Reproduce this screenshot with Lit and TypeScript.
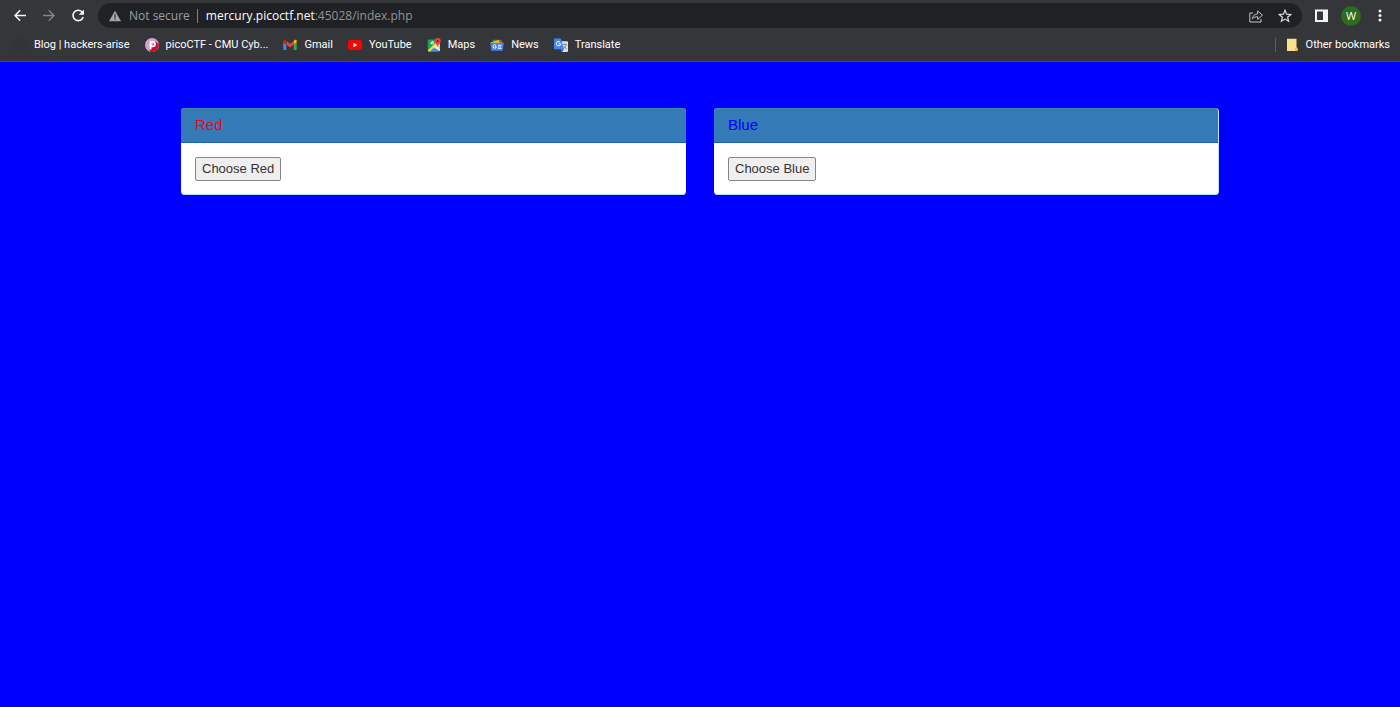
import { LitElement, html, css, svg, TemplateResult } from "lit";
import { customElement, property } from "lit/decorators.js";

interface Bookmark {
  label: string;
  href: string;
  icon: TemplateResult;
}

const picture = (box: string, body: unknown, size = 14) =>
  html`<svg width=${size} height=${size} viewBox=${box} aria-hidden="true">${body}</svg>`;

const bookmarks: Bookmark[] = [
  {
    label: "Blog | hackers-arise",
    href: "#blog",
    icon: picture("0 0 14 14", svg`<rect x="0" y="0" width="14" height="14" rx="1" fill="#333437"/>`),
  },
  {
    label: "picoCTF - CMU Cyb...",
    href: "#picoctf",
    icon: picture("0 0 14 14", svg`
      <circle cx="7" cy="7" r="7" fill="#d3a3cf"/>
      <path d="M10.6 3.2 13.8 6.2A7 7 0 0 1 5 13.7L4.6 11z" fill="#c4102f"/>
      <path d="M5.6 11.4V3.8h2.1a2.2 2.2 0 0 1 0 4.6H5.6" fill="none" stroke="#fff" stroke-width="1.8"/>`),
  },
  {
    label: "Gmail",
    href: "#gmail",
    icon: picture("0 0 14 14", svg`
      <path d="M.3 4.2 3.3 6.4V12H1.1a.8.8 0 0 1-.8-.8z" fill="#4285f4"/>
      <path d="M13.7 4.2 10.7 6.4V12h2.2a.8.8 0 0 0 .8-.8z" fill="#34a853"/>
      <path d="M10.7 3v3.6l3-2.3V3.1c0-1.3-1.3-1.8-2.1-1.1z" fill="#fbbc04"/>
      <path d="M3.3 6.6V3L7 5.8 10.7 3v3.6L7 9.4z" fill="#ea4335"/>
      <path d="M.3 3.1v1.2l3 2.3V3l-.9-.8C1.6 1.6.3 2 .3 3.1z" fill="#c5221f"/>`),
  },
  {
    label: "YouTube",
    href: "#youtube",
    icon: picture("0 0 14 14", svg`
      <rect x="0" y="2" width="14" height="10" rx="2.4" fill="#f00"/>
      <path d="M5.5 4.8v4.4L9.3 7z" fill="#fff"/>`),
  },
  {
    label: "Maps",
    href: "#maps",
    icon: picture("0 0 14 14", svg`
      <rect x=".8" y="1.5" width="12" height="12" rx="1" fill="#1fa463"/>
      <path d="M12.8 5v7.8L6.9 7.2z" fill="#dcdcdc"/>
      <path d="M.8 12.5 11.5 1.8l1.3 2.7-9 9H1.5z" fill="#ffd84a"/>
      <path d="M2.800 13.500 6.900 9.400l4.200 4.100z" fill="#4a89f3"/>
      <path d="M6.900 9.400 8.800 7.500l4 4v1.700z" fill="#e8e8e8"/>
      <path d="M5.500 4.500H4a1.300 1.300 0 1 0 .9-1.100M5.400 4.500A1.500 1.500 0 0 1 4 5.800" fill="none" stroke="#fff" stroke-width=".8"/>
      <path d="M10.7 0a3.100 3.100 0 0 1 3.100 3.100c0 2.300-2.700 3.300-3.100 6.200-.4-2.900-3.100-3.900-3.100-6.200A3.100 3.100 0 0 1 10.700 0z" fill="#ea4335"/>
      <circle cx="10.7" cy="3.1" r="1.1" fill="#7d1f17"/>`),
  },
  {
    label: "News",
    href: "#news",
    icon: picture("0 0 14 14", svg`
      <path d="M3 1.800h8.500V6H3z" fill="#0c9d58"/>
      <path d="M5.500 1.500 13 4l-1 3-7-2z" fill="#ea4335"/>
      <path d="M.8 4.200 9 2l1 4-8.300 2z" fill="#fbbc04"/>
      <path d="M.2 4.800h13.600L12.800 12a1 1 0 0 1-1 .8H2.200a1 1 0 0 1-1-.8z" fill="#4285f4"/>
      <path d="M6.300 8.700H4.700M6 7.400a1.700 1.700 0 1 0 .4 1.300M8 7.300h3.500M8 8.900h3M8 10.400h3.500" fill="none" stroke="#fff" stroke-width=".9"/>`),
  },
  {
    label: "Translate",
    href: "#translate",
    icon: picture("0 0 14 14", svg`
      <path d="M5 3.300h8a1 1 0 0 1 1 1V13a1 1 0 0 1-1 1H8z" fill="#dfe1e5"/>
      <path d="M1 .5h5.800L10 11.300H1a1 1 0 0 1-1-1V1.500a1 1 0 0 1 1-1z" fill="#4285f4"/>
      <path d="M7.400 11.300H10L8 14z" fill="#2a56c6"/>
      <path d="M4.500 5.800h2.200A2.200 2.200 0 1 1 5.900 4" fill="none" stroke="#fff" stroke-width="1"/>
      <path d="M8.800 6.400h4.200M10.900 5.400v1M12.300 6.500c-.4 2-1.500 3.300-2.800 4.300M9.600 7.800c.7 1.500 1.800 2.600 3.100 3.300" fill="none" stroke="#6b7785" stroke-width=".8"/>`),
  },
];

@customElement("colour-panel")
class ColourPanel extends LitElement {
  @property() name = "";
  @property() tone = "red";

  static styles = css`
    :host {
      display: block;
      font-family: "Liberation Sans", Arial, sans-serif;
    }
    .panel {
      border-radius: 4px;
      background: #fff;
      overflow: hidden;
    }
    .edged {
      border-right: 1px solid #c4dfe6;
    }
    .heading {
      padding: 8px 14px 9px;
      background: #337ab7;
      border-top: 1px solid #3a8a9e;
      border-bottom: 1px solid #1e63ad;
    }
    .title {
      margin: 0;
      font-size: 15px;
      font-weight: 400;
      line-height: 16px;
    }
    .red {
      color: #ff0018;
    }
    .blue {
      color: #0000ff;
    }
    .body {
      display: flex;
      padding: 14px 14px 13px;
      border-bottom: 1px solid #a8dfe6;
    }
    .choose {
      padding: 0 6px;
      border: 1px solid #858585;
      border-radius: 2px;
      background: #efefef;
      color: #333;
      font: 13px/22px "Liberation Sans", Arial, sans-serif;
    }
  `;

  render() {
    return html`
      <section class="panel ${this.tone === "blue" ? "edged" : ""}">
        <div class="heading"><h3 class="title ${this.tone}">${this.name}</h3></div>
        <div class="body"><button class="choose" type="button">Choose ${this.name}</button></div>
      </section>
    `;
  }
}

@customElement("app-root")
class AppRoot extends LitElement {
  static styles = css`
    :host {
      display: flex;
      flex-direction: column;
      min-height: 100vh;
      background: #00f;
      font-family: "Open Sans", "Noto Sans", sans-serif;
    }
    svg {
      display: block;
      flex: none;
    }
    button {
      padding: 0;
      border: 0;
      background: none;
      color: inherit;
    }
    .chrome {
      background: #35363a;
      border-bottom: 1px solid #4c4d45;
      color: #fff;
    }
    .toolbar {
      display: flex;
      align-items: center;
      padding: 3px 12px 0;
    }
    .nav {
      display: flex;
      gap: 13px;
      padding-right: 12px;
    }
    .address {
      flex: 1;
      display: flex;
      align-items: center;
      height: 25px;
      padding: 0 10px;
      border-radius: 13px;
      background: #202124;
      font-size: 12px;
    }
    .insecure {
      padding: 0 7px;
      color: #9aa0a6;
      font: inherit;
    }
    .rule {
      width: 1px;
      height: 14px;
      margin-right: 8px;
      background: #7c7f83;
    }
    .field {
      min-width: 0;
      padding: 0;
      border: 0;
      outline: 0;
      background: none;
      font: inherit;
      line-height: 24px;
    }
    .host {
      field-sizing: content;
      color: #fff;
    }
    .path {
      flex: 1;
      color: #8f9499;
    }
    .actions {
      display: flex;
      gap: 15px;
    }
    .tools {
      display: flex;
      align-items: center;
      gap: 11px;
      padding-left: 12px;
    }
    .avatar {
      width: 20px;
      height: 20px;
      border-radius: 50%;
      background: #2e6b1c;
      font: 11px/20px "Open Sans", sans-serif;
    }
    .bookmarks {
      display: flex;
      align-items: center;
      gap: 15px;
      height: 33px;
      padding: 0 10px 0 13px;
      font: 11px Roboto, "Open Sans", sans-serif;
    }
    .bookmark {
      display: flex;
      align-items: center;
      gap: 7px;
      color: #fff;
      text-decoration: none;
      white-space: nowrap;
    }
    .other {
      margin-left: auto;
      padding-left: 9px;
      border-left: 1px solid #5b5d61;
    }
    .content {
      display: grid;
      grid-template-columns: 1fr 1fr;
      gap: 28px;
      width: calc(100% - 28px);
      max-width: 1038px;
      margin: 46px auto 0;
    }
  `;

  render() {
    return html`
      <header class="chrome">
        <div class="toolbar">
          <nav class="nav" aria-label="History">
            <button aria-label="Back">${picture("0 0 16 16", svg`<path d="M14 7.500H3M8.200 2.300 3 7.500l5.200 5.200" fill="none" stroke="#f1f3f4" stroke-width="1.500"/>`, 16)}</button>
            <button aria-label="Forward">${picture("0 0 16 16", svg`<path d="M2 7.500h11M7.800 2.300 13 7.500l-5.200 5.200" fill="none" stroke="#85878a" stroke-width="1.300"/>`, 16)}</button>
            <button aria-label="Reload">${picture("0 0 16 16", svg`<path d="M12.400 4.300A5.200 5.200 0 1 0 13.200 9" fill="none" stroke="#f1f3f4" stroke-width="1.600"/><path d="M14 1.500v5.300H8.700z" fill="#f1f3f4"/>`, 16)}</button>
          </nav>
          <div class="address">
            ${picture("0 0 14 14", svg`<path d="M7 1.700 13 12.300H1z" fill="#a4a8ac"/><path d="M7 5.300v3.400M7 9.500v1.300" stroke="#202124" stroke-width="1.200"/>`)}
            <button class="insecure">Not secure</button>
            <span class="rule"></span>
            <input class="field host" aria-label="Site" value="mercury.picoctf.net" />
            <input class="field path" aria-label="Port and path" value=":45028/index.php" />
            <div class="actions">
              <button aria-label="Share">${picture("0 0 14 14", svg`<path d="M4 4H.8v9H12v-3M3.400 9.800C4 6.600 5.800 5 8.700 4.900V2L13.500 6.200 8.700 10.400V7.700C6.400 7.700 4.800 8.300 3.400 9.800z" fill="none" stroke="#c4c7ca" stroke-width="1" stroke-linejoin="round"/>`)}</button>
              <button aria-label="Bookmark this page">${picture("0 0 14 14", svg`<path d="M7 1.300 8.600 5.200l4.200.3-3.200 2.700 1 4.100L7 10.100l-3.600 2.200 1-4.100L1.200 5.500l4.200-.3z" fill="none" stroke="#dadce0" stroke-width="1.200"/>`)}</button>
            </div>
          </div>
          <div class="tools">
            <button aria-label="Side panel">${picture("0 0 16 16", svg`<path d="M1 1.500h13v12.500H1zM3 3.500v8.500h6V3.500z" fill="#f1f3f4" fill-rule="evenodd"/>`, 16)}</button>
            <button class="avatar" aria-label="Profile W">W</button>
            <button aria-label="Menu">${picture("0 0 16 16", svg`<g fill="#f1f3f4"><circle cx="8" cy="3" r="1.500"/><circle cx="8" cy="7.500" r="1.500"/><circle cx="8" cy="12" r="1.500"/></g>`, 16)}</button>
          </div>
        </div>
        <nav class="bookmarks" aria-label="Bookmarks">
          ${bookmarks.map((b) => html`<a class="bookmark" href=${b.href}>${b.icon}${b.label}</a>`)}
          <a class="bookmark other" href="#other">
            ${picture("0 0 14 14", svg`<path d="M2 .8h9.500v8.500l1 1V13H2z" fill="#ffe08a"/><path d="M10 10h2.500v3H10z" fill="#e3bd55"/>`)}
            Other bookmarks
          </a>
        </nav>
      </header>
      <main class="content">
        <colour-panel name="Red" tone="red"></colour-panel>
        <colour-panel name="Blue" tone="blue"></colour-panel>
      </main>
    `;
  }
}
